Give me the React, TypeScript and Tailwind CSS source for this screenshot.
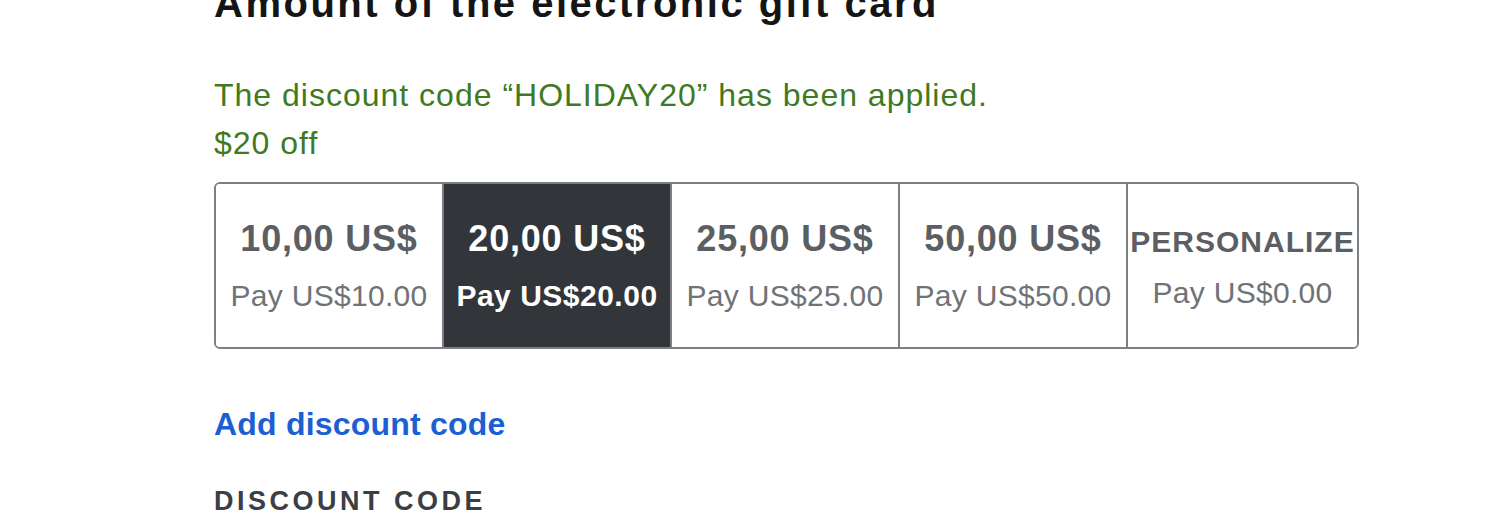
import React from 'react';

const amounts = [
  { label: '10,00 US$', pay: 'Pay US$10.00' },
  { label: '20,00 US$', pay: 'Pay US$20.00', selected: true },
  { label: '25,00 US$', pay: 'Pay US$25.00' },
  { label: '50,00 US$', pay: 'Pay US$50.00' },
  { label: 'PERSONALIZE', pay: 'Pay US$0.00', custom: true },
];

export default function App() {
  return (
    <div className="w-[1500px] h-[516px] overflow-hidden bg-white font-['Liberation_Sans',sans-serif]">
      <div className="ml-[214px] w-[1145px] -mt-[17px]">
        <h1 className="text-[40px] leading-[40px] font-bold tracking-[2.5px] text-[#151515] whitespace-nowrap">
          Amount of the electronic gift card
        </h1>

        <div className="mt-[48px] text-[#3f7a22] text-[32px] leading-[48px] tracking-[1px]">
          <p>The discount code “HOLIDAY20” has been applied.</p>
          <p>$20 off</p>
        </div>

        <div className="mt-[15px] grid grid-cols-[226px_228px_228px_228px_1fr] h-[167px] border-2 border-[#7d7f82] rounded-[6px] overflow-hidden">
          {amounts.map((a, i) => (
            <button
              key={a.label}
              className={
                'flex flex-col items-center justify-center ' +
                (i > 0 ? 'border-l-2 border-[#7d7f82] ' : '') +
                (a.selected ? 'bg-[#32363b] text-white' : 'bg-white')
              }
            >
              <span
                className={
                  a.custom
                    ? 'text-[30px] leading-[36px] font-bold tracking-[1px] text-[#5b5e63]'
                    : 'text-[36px] leading-[36px] font-bold tracking-[0.8px] ' +
                      (a.selected ? 'text-white' : 'text-[#5b5e63]')
                }
              >
                {a.label}
              </span>
              <span
                className={
                  'text-[30px] leading-[30px] ' +
                  (a.custom ? 'mt-[18px] ' : 'mt-[24px] ') +
                  (a.selected ? 'text-white font-bold tracking-[0.5px]' : 'text-[#6f7276] tracking-[0.3px]')
                }
              >
                {a.pay}
              </span>
            </button>
          ))}
        </div>

        <a className="block mt-[55px] text-[32px] leading-[40px] font-bold tracking-[0.2px] text-[#1b5fd3]">
          Add discount code
        </a>

        <div className="mt-[42px] text-[27px] leading-[30px] font-bold tracking-[3.5px] text-[#3b3e43]">DISCOUNT CODE</div>
      </div>
    </div>
  );
}
